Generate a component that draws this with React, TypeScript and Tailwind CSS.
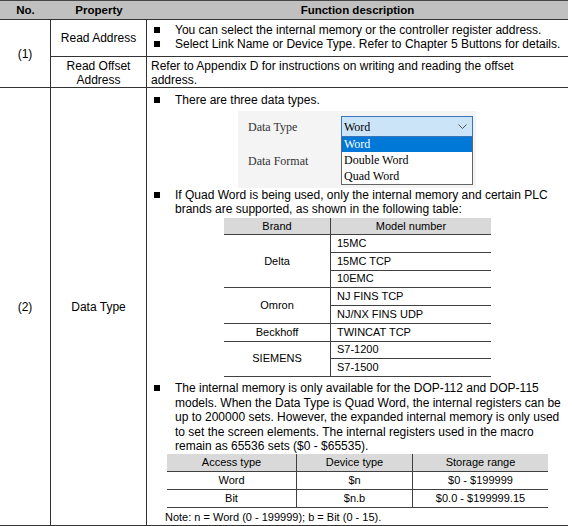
import type { ReactNode } from "react";

function Bullet({ children, lh = "h-[14px]" }: { children: ReactNode; lh?: string }) {
  return (
    <div className="flex">
      <div className={`w-[21px] shrink-0 flex items-center ${lh}`}>
        <span className="w-[6px] h-[6px] bg-black" />
      </div>
      <div className="whitespace-nowrap">{children}</div>
    </div>
  );
}

const brands = [
  { name: "Delta", models: ["15MC", "15MC TCP", "10EMC"], h: "h-[53.25px]" },
  { name: "Omron", models: ["NJ FINS TCP", "NJ/NX FINS UDP"], h: "h-[35.5px]" },
  { name: "Beckhoff", models: ["TWINCAT TCP"], h: "h-[17.75px]" },
  { name: "SIEMENS", models: ["S7-1200", "S7-1500"], h: "h-[35.5px]" },
];

const access = [
  ["Word", "$n", "$0 - $199999"],
  ["Bit", "$n.b", "$0.0 - $199999.15"],
];

export default function App() {
  return (
    <div className="w-[572px] h-[526px] bg-white text-black text-[12px] leading-[14px] font-['Liberation_Sans',Arial,sans-serif]">
      <div className="w-[568px] border-t border-[#444]">
        {/* header */}
        <div className="flex items-center h-[19px] bg-[#c0c0c0] border-b border-[#333] font-bold text-[11.5px]">
          <div className="w-[51px] text-center">No.</div>
          <div className="w-[96px] text-center">Property</div>
          <div className="flex-1 text-center">Function description</div>
        </div>

        {/* row 1 */}
        <div className="flex h-[68px] border-b border-[#333]">
          <div className="w-[51px] border-r border-[#333] flex items-center justify-center">(1)</div>
          <div className="flex-1 flex flex-col">
            <div className="flex h-[38px] border-b border-[#333]">
              <div className="w-[96px] border-r border-[#333] flex items-center justify-center">Read Address</div>
              <div className="flex-1 pl-[7px] pt-[3px]">
                <Bullet>You can select the internal memory or the controller register address.</Bullet>
                <Bullet>Select Link Name or Device Type. Refer to Chapter 5 Buttons for details.</Bullet>
              </div>
            </div>
            <div className="flex flex-1">
              <div className="w-[96px] border-r border-[#333] text-center pt-[2px] leading-[14px]">
                Read Offset
                <br />
                Address
              </div>
              <div className="flex-1 pl-[4px] pt-[2px] leading-[14px] whitespace-nowrap">
                Refer to Appendix D for instructions on writing and reading the offset
                <br />
                address.
              </div>
            </div>
          </div>
        </div>

        {/* row 2 */}
        <div className="flex h-[438px] border-b border-[#333]">
          <div className="w-[51px] border-r border-[#333] flex items-center justify-center">(2)</div>
          <div className="w-[96px] border-r border-[#333] flex items-center justify-center">Data Type</div>
          <div className="flex-1 pl-[7px] pt-[5px]">
            <Bullet>There are three data types.</Bullet>

            {/* dialog snapshot */}
            <div className="mt-[4px] ml-[84px] w-[238px] h-[77px] bg-[#f4f4f4] flex pl-[10px] pt-[5px] text-[12px] font-['Liberation_Serif','Times_New_Roman',serif]">
              <div className="w-[93px] text-[#333]">
                <div className="h-[21px] flex items-center">Data Type</div>
                <div className="mt-[13px] h-[21px] flex items-center">Data Format</div>
              </div>
              <div className="w-[132px]">
                <div className="h-[21px] border border-[#3a76b5] bg-[#cce4f7] flex items-center justify-between pl-[2px] pr-[5px]">
                  <span>Word</span>
                  <svg width="9" height="5" viewBox="0 0 9 5">
                    <polyline points="0.5,0.5 4.5,4.5 8.5,0.5" fill="none" stroke="#555" strokeWidth="1" />
                  </svg>
                </div>
                <div className="border border-t-0 border-[#646464] bg-white leading-[15px]">
                  <div className="h-[15px] pl-[2px] bg-[#0078d7] text-white">Word</div>
                  <div className="h-[16px] pl-[2px] flex items-center">Double Word</div>
                  <div className="h-[16px] pl-[2px] flex items-center">Quad Word</div>
                </div>
              </div>
            </div>

            <Bullet>
              If Quad Word is being used, only the internal memory and certain PLC
              <br />
              brands are supported, as shown in the following table:
            </Bullet>

            {/* brand table */}
            <div className="mt-[2px] ml-[70px] w-[267px] text-[11px] leading-[13px]">
              <div className="flex h-[17px] bg-[#d9d9d9] border-b border-[#404040]">
                <div className="w-[107px] border-r border-[#404040] flex items-center justify-center">Brand</div>
                <div className="flex-1 flex items-center justify-center">Model number</div>
              </div>
              {brands.map((b) => (
                <div key={b.name} className={`flex ${b.h} border-b border-[#404040]`}>
                  <div className="w-[107px] border-r border-[#404040] flex items-center justify-center">{b.name}</div>
                  <div className="flex-1 flex flex-col">
                    {b.models.map((m, i) => (
                      <div
                        key={m}
                        className={`flex-1 flex items-center pl-[6px] ${i < b.models.length - 1 ? "border-b border-[#404040]" : ""}`}
                      >
                        {m}
                      </div>
                    ))}
                  </div>
                </div>
              ))}
            </div>

            <div className="mt-[4px] leading-[14.5px]">
              <Bullet lh="h-[14.5px]">
                The internal memory is only available for the DOP-112 and DOP-115
                <br />
                models. When the Data Type is Quad Word, the internal registers can be
                <br />
                up to 200000 sets. However, the expanded internal memory is only used
                <br />
                to set the screen elements. The internal registers used in the macro
                <br />
                remain as 65536 sets ($0 - $65535).
              </Bullet>
            </div>

            {/* access table */}
            <div className="ml-[13px] w-[381px] text-[11px] leading-[13px]">
              <div className="grid grid-cols-[130px_116px_135px] h-[18px] bg-[#d9d9d9] border-b border-[#404040]">
                <div className="border-r border-[#404040] flex items-center justify-center">Access type</div>
                <div className="border-r border-[#404040] flex items-center justify-center">Device type</div>
                <div className="flex items-center justify-center">Storage range</div>
              </div>
              {access.map((r) => (
                <div key={r[0]} className="grid grid-cols-[130px_116px_135px] h-[18px] border-b border-[#404040]">
                  <div className="border-r border-[#404040] flex items-center justify-center">{r[0]}</div>
                  <div className="border-r border-[#404040] flex items-center justify-center">{r[1]}</div>
                  <div className="flex items-center justify-center">{r[2]}</div>
                </div>
              ))}
            </div>
            <div className="mt-[2px] ml-[11px] text-[11px] leading-[14px]">
              Note: n = Word (0 - 199999); b = Bit (0 - 15).
            </div>
          </div>
        </div>
      </div>
    </div>
  );
}
